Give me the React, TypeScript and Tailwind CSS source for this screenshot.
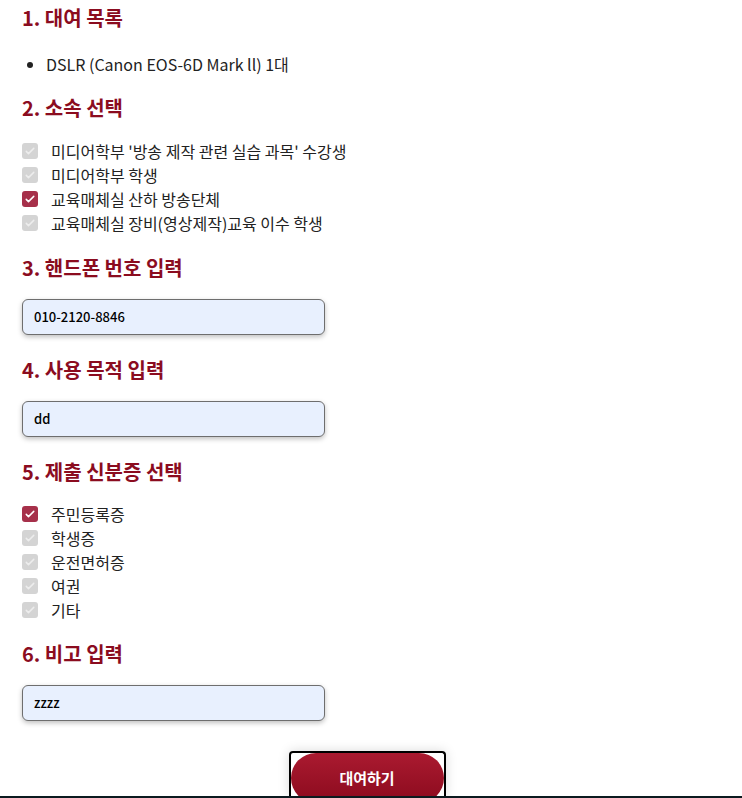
import React from 'react'

const FONT = { fontFamily: '"Noto Sans CJK KR", "Noto Sans", sans-serif' }

type Opt = { label: string; checked?: boolean }

const affiliations: Opt[] = [
  { label: "미디어학부 '방송 제작 관련 실습 과목' 수강생" },
  { label: '미디어학부 학생' },
  { label: '교육매체실 산하 방송단체', checked: true },
  { label: '교육매체실 장비(영상제작)교육 이수 학생' },
]

const idCards: Opt[] = [
  { label: '주민등록증', checked: true },
  { label: '학생증' },
  { label: '운전면허증' },
  { label: '여권' },
  { label: '기타' },
]

function Heading({ children }: { children: React.ReactNode }) {
  return <h2 className="text-[20px] font-bold leading-[28px] text-[#8b0c1f]">{children}</h2>
}

function CheckRow({ label, checked }: Opt) {
  return (
    <label className="flex items-center h-[24px]">
      <span
        className={`w-[16px] h-[16px] rounded-[3px] flex items-center justify-center ${
          checked ? 'bg-[#a6304a]' : 'bg-[#d4d4d4]'
        }`}
      >
        <svg viewBox="0 0 16 16" className="w-[12px] h-[12px]" fill="none">
          <path
            d="M3 8.5l3 3 7-7"
            stroke={checked ? '#ffffff' : '#ededed'}
            strokeWidth="2"
            strokeLinecap="round"
            strokeLinejoin="round"
          />
        </svg>
      </span>
      <span className="ml-[13px] text-[16px] text-[#222]">{label}</span>
    </label>
  )
}

function TextBox({ value }: { value: string }) {
  return (
    <div className="w-[303px] h-[36px] rounded-[6px] border border-[#6e6e6e] bg-[#e8f0fe] shadow-[0_2px_5px_rgba(0,0,0,0.25)] flex items-center pl-[11px] text-[13px] font-medium text-black">
      {value}
    </div>
  )
}

export default function App() {
  return (
    <div style={FONT} className="bg-white min-h-[798px] flex flex-col">
      <div className="px-[22px] pt-[4px] flex-1">
        {/* 1 */}
        <Heading>1. 대여 목록</Heading>
        <ul className="mt-[20px] list-disc pl-[24px] text-[16px] leading-[24px] text-[#222]">
          <li>DSLR (Canon EOS-6D Mark ll) 1대</li>
        </ul>

        {/* 2 */}
        <div className="mt-[18px]">
          <Heading>2. 소속 선택</Heading>
          <div className="mt-[17px]">
            {affiliations.map((o) => (
              <CheckRow key={o.label} {...o} />
            ))}
          </div>
        </div>

        {/* 3 */}
        <div className="mt-[19px]">
          <Heading>3. 핸드폰 번호 입력</Heading>
          <div className="mt-[17px]">
            <TextBox value="010-2120-8846" />
          </div>
        </div>

        {/* 4 */}
        <div className="mt-[21px]">
          <Heading>4. 사용 목적 입력</Heading>
          <div className="mt-[17px]">
            <TextBox value="dd" />
          </div>
        </div>

        {/* 5 */}
        <div className="mt-[21px]">
          <Heading>5. 제출 신분증 선택</Heading>
          <div className="mt-[16px]">
            {idCards.map((o) => (
              <CheckRow key={o.label} {...o} />
            ))}
          </div>
        </div>

        {/* 6 */}
        <div className="mt-[18px]">
          <Heading>6. 비고 입력</Heading>
          <div className="mt-[17px]">
            <TextBox value="zzzz" />
          </div>
        </div>

        {/* submit */}
        <div className="mt-[30px] flex justify-center">
          <div className="w-[157px] h-[45px] overflow-hidden border-2 border-b-0 border-black rounded-t-[4px] shadow-[0_0_12px_rgba(0,0,0,0.15)] ml-[-8px]">
            <button className="w-full h-[50px] rounded-full bg-gradient-to-b from-[#aa1a30] to-[#8c0a1e] text-white text-[15px] font-bold">
              대여하기
            </button>
          </div>
        </div>
      </div>
      <div className="h-[3px] bg-[#0b1a1f]" />
    </div>
  )
}
